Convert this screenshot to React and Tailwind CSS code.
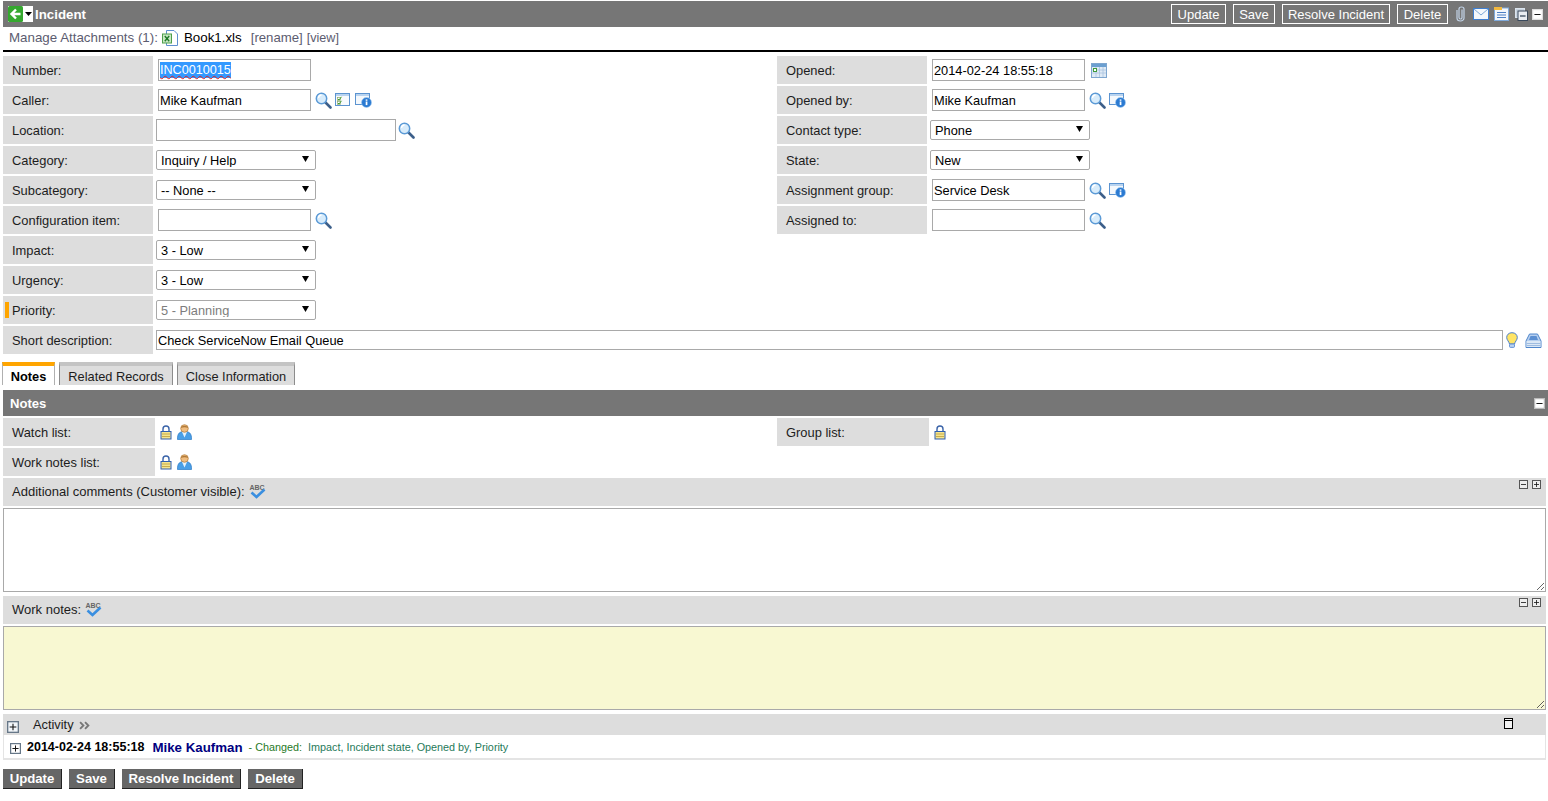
import React from "react";

const Mag = ({ className = "" }) => (
  <svg width="17" height="17" viewBox="0 0 17 17" className={`shrink-0 ${className}`}>
    <path d="M10.5 10.5 L15.5 15.5" stroke="#3c5f8a" strokeWidth="2.6" strokeLinecap="round" />
    <circle cx="6.5" cy="6.5" r="5.2" fill="#d8ecfb" stroke="#5b9ad6" strokeWidth="1.5" />
    <path d="M3.5 6 A3.2 3.2 0 0 1 6.5 3" stroke="#fff" strokeWidth="1.3" fill="none" />
  </svg>
);
const Win = ({ children, className = "" }) => (
  <svg width="17" height="16" viewBox="0 0 17 16" className={`shrink-0 ${className}`}>
    <rect x="0.5" y="1.5" width="14" height="11" fill="#f4f8fc" stroke="#5b93d0" />
    <rect x="1" y="2" width="13" height="2" fill="#b8d3ef" />
    {children}
  </svg>
);
const Check = ({ className = "" }) => (
  <svg width="15" height="14" viewBox="0 0 15 14" className={`shrink-0 ${className}`}>
    <rect x="0.5" y="0.5" width="14" height="12" fill="#f7fafd" stroke="#5b93d0" />
    <rect x="1" y="1" width="13" height="2" fill="#b8d3ef" />
    <rect x="2.5" y="4.5" width="3" height="3" fill="#fff" stroke="#8aa86a" strokeWidth="0.7" />
    <rect x="2.5" y="8.5" width="3" height="3" fill="#fff" stroke="#8aa86a" strokeWidth="0.7" />
    <path d="M3 6 L4 7 L6.5 3.8 M3 10 L4 11 L6.5 7.8" stroke="#3f9a2e" strokeWidth="1" fill="none" />
  </svg>
);
const Info = ({ className = "" }) => (
  <Win className={className}>
    <circle cx="11.5" cy="10.5" r="5" fill="#2a7ad2" stroke="#a4cdf2" strokeWidth="0.6" />
    <rect x="10.7" y="9.5" width="1.7" height="3.6" fill="#fff" />
    <rect x="10.7" y="7.4" width="1.7" height="1.4" fill="#fff" />
  </Win>
);
const Cal = () => (
  <svg width="16" height="15" viewBox="0 0 16 15" className="shrink-0">
    <rect x="0.5" y="0.5" width="15" height="14" fill="#dfeaf5" stroke="#7ea6cf" />
    <rect x="1" y="1" width="14" height="3" fill="#6b9fd0" />
    <path d="M1 7h14M1 10h14M5 4v10M8.5 4v10M12 4v10" stroke="#a9c4df" strokeWidth="0.8" />
    <rect x="2.5" y="5.5" width="3" height="3" fill="#fff" stroke="#3e9a3a" />
  </svg>
);
const Lock = () => (
  <svg width="12" height="15" viewBox="0 0 12 15" className="shrink-0">
    <path d="M3 7V4a3 3 0 0 1 6 0v3" fill="none" stroke="#3a63a8" strokeWidth="1.4" />
    <rect x="1" y="6.5" width="10" height="7.5" fill="#f5e48f" stroke="#2f5fb0" />
    <path d="M2 9h8M2 11.5h8" stroke="#c7ad4c" />
  </svg>
);
const User = () => (
  <svg width="15" height="16" viewBox="0 0 15 16" className="shrink-0">
    <path d="M0.5 15.5 C0.2 9 3 7.5 7.5 7.5 C12 7.5 14.8 9 14.5 15.5 Z" fill="#4a9fe6" stroke="#2a78c4" strokeWidth="0.7" />
    <path d="M5 8 L7.5 13.5 L10 8 Z" fill="#e6f2fb" />
    <circle cx="7.5" cy="4.5" r="3.8" fill="#f0bd80" stroke="#b07a38" strokeWidth="0.7" />
    <path d="M4 4 C4 1 11 1 11 4 C9 3 6 3 4 4Z" fill="#b07a38" />
  </svg>
);
const Spell = () => (
  <svg width="17" height="15" viewBox="0 0 17 15" className="shrink-0">
    <text x="0.5" y="6" fontSize="7" fontFamily="'Liberation Sans', sans-serif" fill="#666" fontWeight="700">ABC</text>
    <path d="M2.5 8.5 L7.5 13 L15.5 5.5" fill="none" stroke="#3a8fe0" strokeWidth="2.6" />
  </svg>
);
const Bulb = () => (
  <svg width="12" height="16" viewBox="0 0 12 16" className="shrink-0">
    <path d="M6 0.7 C2.6 0.7 0.7 3 0.7 5.5 C0.7 8 3 9.5 3.5 12 H8.5 C9 9.5 11.3 8 11.3 5.5 C11.3 3 9.4 0.7 6 0.7Z" fill="#ffe566" stroke="#4a7fd0" />
    <rect x="3.5" y="12" width="5" height="3.4" rx="1" fill="#bcd4f0" stroke="#4a7fd0" strokeWidth="0.8" />
  </svg>
);
const Drawer = () => (
  <svg width="17" height="15" viewBox="0 0 17 15" className="shrink-0">
    <path d="M4.5 1 H12.5 L16 8 V14.5 H1 V8 Z" fill="#b6cfee" stroke="#4f86cc" />
    <path d="M5.5 3h6l1.5 4H4z" fill="#5b8fd2" />
    <rect x="1.5" y="8" width="14" height="6" fill="#dbe8f6" />
    <path d="M1.5 10.5h14M1.5 12.5h14" stroke="#9fbce0" />
  </svg>
);
const Clip = () => (
  <svg width="11" height="16" viewBox="0 0 11 16" className="shrink-0">
    <path d="M7 3.5 V11.5 A1.5 1.5 0 0 1 4 11.5 V3 A2.5 2 0 0 1 9 3 V12 A3.5 3 0 0 1 2 12 V4" fill="none" stroke="#c3d4e8" strokeWidth="1.2" />
  </svg>
);
const Mail = () => (
  <svg width="16" height="12" viewBox="0 0 16 12" className="shrink-0">
    <rect x="0.5" y="0.5" width="15" height="11" fill="#f4f8fc" stroke="#3f7fd0" />
    <path d="M1 1 L8 7 L15 1" fill="none" stroke="#7da8d8" />
  </svg>
);
const ListI = () => (
  <svg width="15" height="14" viewBox="0 0 15 14" className="shrink-0">
    <rect x="0.5" y="1" width="14" height="12.5" fill="#f3f7fc" stroke="#7fa9da" />
    <rect x="0" y="0" width="8" height="3" fill="#f3b93f" />
    <path d="M3 5.5h9M3 8h9M3 10.5h9" stroke="#4c7fc4" />
  </svg>
);
const Copy = () => (
  <svg width="13" height="13" viewBox="0 0 13 13" className="shrink-0">
    <rect x="0.5" y="0.5" width="9" height="9" fill="#c8d3de" stroke="#dbe4ee" />
    <rect x="3" y="3" width="9.5" height="9.5" fill="#e8edf3" stroke="#39495c" />
    <path d="M5 8h5.5" stroke="#39495c" strokeWidth="1.3" />
  </svg>
);
const PM = ({ plus, s = 9, className = "", bg = "#eeeeee", stroke = "#555" }) => (
  <svg width={s} height={s} viewBox="0 0 9 9" className={`shrink-0 ${className}`}>
    <rect x="0.5" y="0.5" width="8" height="8" fill={bg} stroke={stroke} />
    <path d={plus ? "M2 4.5h5M4.5 2v5" : "M2 4.5h5"} stroke="#111" strokeWidth="0.8" />
  </svg>
);
const Excel = () => (
  <svg width="16" height="16" viewBox="0 0 16 16" className="shrink-0">
    <path d="M4.5 0.5 H12 L15.5 4 V15.5 H4.5 Z" fill="#fff" stroke="#5f8fcf" />
    <rect x="0.5" y="4" width="9" height="9" fill="#c9e8c5" stroke="#4f9f4a" />
    <path d="M2.8 6 L7.2 11.2 M7.2 6 L2.8 11.2" stroke="#1f7a28" strokeWidth="1.4" />
  </svg>
);
const Back = () => (
  <div className="w-[25px] h-[16px] bg-white flex items-center shrink-0">
    <svg width="15" height="16" viewBox="0 0 15 16" className="shrink-0">
      <rect width="15" height="16" rx="1.5" fill="#35a82f" />
      <path d="M12.5 8 H4 M8 3.5 L3.5 8 L8 12.5" fill="none" stroke="#fff" strokeWidth="2.4" />
    </svg>
    <svg width="7" height="4" viewBox="0 0 7 4" className="ml-[2px]">
      <path d="M0 0h7L3.5 4z" fill="#000" />
    </svg>
  </div>
);

const Label = ({ children, w = "w-[150px]", marker }) => (
  <div className={`relative ${w} h-[28px] bg-[#dddddd] pl-[9px] pt-[2px] text-[12.9px] flex items-center shrink-0 text-[#1c1c1c]`}>
    {marker && <span className="absolute left-[2px] top-[6px] w-[4px] h-[16px] bg-[#ffa500]" />}
    {children}
  </div>
);
const TextIn = ({ value = "", w = "w-[153px]", className = "" }) => (
  <input
    readOnly
    value={value}
    className={`${w} h-[22px] border border-[#a9a9a9] px-[1px] bg-white text-black outline-none shrink-0 ${className}`}
  />
);
const Sel = ({ value, muted }) => (
  <div className="relative w-[160px] h-[20px] ml-[3px] shrink-0">
    <select
      value={value}
      disabled={muted}
      onChange={() => {}}
      className={`appearance-none w-full h-full border border-[#a9a9a9] rounded-[2px] bg-white pl-[4px] pt-[2px] outline-none ${muted ? "text-[#7d7d7d]" : "text-black"}`}
    >
      <option>{value}</option>
    </select>
    <svg width="7" height="6" viewBox="0 0 7 6" className="absolute right-[7px] top-[6px] pointer-events-none">
      <path d="M0 0h7L3.5 6z" fill="#000" />
    </svg>
  </div>
);
const Row = ({ label, marker, children }) => (
  <div className="flex items-center h-[28px]">
    <Label marker={marker}>{label}</Label>
    {children}
  </div>
);
const TopBtn = ({ children, w }) => (
  <div className={`${w} h-[20px] pt-[1px] border border-white text-white text-[13px] flex items-center justify-center shrink-0`}>{children}</div>
);
const BotBtn = ({ children, w }) => (
  <div className={`${w} h-[20px] pt-[1px] bg-[#666666] border-r border-b border-[#222] text-white text-[13.2px] font-bold flex items-center justify-center`}>{children}</div>
);
const Tab = ({ children, active, w }) =>
  active ? (
    <div className={`${w} h-[23px] pt-[3px] border-t-[4px] border-t-[#ffa500] border-x border-x-[#b0b0b0] bg-white font-bold text-black flex items-center justify-center`}>
      {children}
    </div>
  ) : (
    <div className={`${w} h-[23px] pt-[3px] border-t-[4px] border-t-[#c4c4c4] border-x border-x-[#8c8c8c] bg-[#dddddd] text-[#1c1c1c] flex items-center justify-center`}>
      {children}
    </div>
  );
const JournalBar = ({ children }) => (
  <div className="h-[28px] w-[1543px] bg-[#dddddd] pl-[9px] flex items-start justify-between text-[#1c1c1c] text-[13px]">
    <div className="flex items-center gap-[4px] h-[26px]">{children}</div>
    <div className="flex gap-[4px] pt-[2px] pr-[5px]">
      <PM />
      <PM plus />
    </div>
  </div>
);

export default function App() {
  return (
    <div className="w-[1548px] h-[801px] overflow-hidden bg-white pt-[1px] text-[12.8px] leading-none font-['Liberation_Sans',Arial,sans-serif]">
      {/* header */}
      <div className="ml-[3px] h-[26px] bg-[#767676] flex items-center justify-between pl-[5px] pr-[5px]">
        <div className="flex items-center gap-[2px]">
          <Back />
          <span className="text-white font-bold text-[13.3px] pt-[1px]">Incident</span>
        </div>
        <div className="flex items-center">
          <div className="flex items-center gap-[7px]">
            <TopBtn w="w-[55px]">Update</TopBtn>
            <TopBtn w="w-[42px]">Save</TopBtn>
            <TopBtn w="w-[108px]">Resolve Incident</TopBtn>
            <TopBtn w="w-[51px]">Delete</TopBtn>
          </div>
          <div className="flex items-center ml-[7px] gap-[5px]">
            <Clip />
            <span className="ml-[2px]"><Mail /></span>
            <ListI />
            <span className="ml-[1px]"><Copy /></span>
            <PM s={11} className="-ml-[1px]" bg="#fff" stroke="#ddd" />
          </div>
        </div>
      </div>
      {/* attachments */}
      <div className="h-[23px] ml-[9px] pb-[1px] flex items-center text-[#5c5c70] text-[13.33px]">
        <span>Manage Attachments (1):</span>
        <span className="ml-[4px]"><Excel /></span>
        <span className="ml-[6px] text-black">Book1.xls</span>
        <span className="ml-[9px] text-[13.2px]">[rename]</span>
        <span className="ml-[4px] text-[12.6px]">[view]</span>
      </div>
      <div className="ml-[3px] h-[2px] bg-black" />

      {/* form */}
      <div className="ml-[3px] mt-[4px] grid grid-cols-[774px_1fr]">
        <div className="flex flex-col gap-[2px]">
          <Row label="Number:">
            <div className="ml-[5px] w-[153px] h-[22px] border border-[#a9a9a9] px-[1px] flex items-center text-[12.6px]">
              <span className="bg-[#3399ff] text-white h-[16px] flex items-center underline decoration-wavy decoration-[#e02020] decoration-1 underline-offset-[1px]">INC0010015</span>
            </div>
          </Row>
          <Row label="Caller:">
            <TextIn value="Mike Kaufman" className="ml-[5px]" />
            <Mag className="ml-[4px]" />
            <span className="ml-[3px]"><Check /></span>
            <Info className="ml-[5px]" />
          </Row>
          <Row label="Location:">
            <TextIn w="w-[240px]" className="ml-[3px]" />
            <Mag className="ml-[2px]" />
          </Row>
          <Row label="Category:"><Sel value="Inquiry / Help" /></Row>
          <Row label="Subcategory:"><Sel value="-- None --" /></Row>
          <Row label="Configuration item:">
            <TextIn className="ml-[5px]" />
            <Mag className="ml-[4px]" />
          </Row>
          <Row label="Impact:"><Sel value="3 - Low" /></Row>
          <Row label="Urgency:"><Sel value="3 - Low" /></Row>
          <Row label="Priority:" marker><Sel value="5 - Planning" muted /></Row>
        </div>
        <div className="flex flex-col gap-[2px]">
          <Row label="Opened:">
            <TextIn value="2014-02-24 18:55:18" className="ml-[5px]" />
            <span className="ml-[6px]"><Cal /></span>
          </Row>
          <Row label="Opened by:">
            <TextIn value="Mike Kaufman" className="ml-[5px]" />
            <Mag className="ml-[4px]" />
            <Info className="ml-[3px]" />
          </Row>
          <Row label="Contact type:"><Sel value="Phone" /></Row>
          <Row label="State:"><Sel value="New" /></Row>
          <Row label="Assignment group:">
            <TextIn value="Service Desk" className="ml-[5px]" />
            <Mag className="ml-[4px]" />
            <Info className="ml-[3px]" />
          </Row>
          <Row label="Assigned to:">
            <TextIn className="ml-[5px]" />
            <Mag className="ml-[4px]" />
          </Row>
        </div>
      </div>
      <div className="ml-[3px] mt-[2px] flex items-center h-[28px]">
        <Label>Short description:</Label>
        <input
          readOnly
          value="Check ServiceNow Email Queue"
          className="ml-[3px] w-[1347px] h-[20px] border border-[#a9a9a9] px-[1px] text-black outline-none"
        />
        <span className="ml-[3px]"><Bulb /></span>
        <span className="ml-[7px]"><Drawer /></span>
      </div>

      {/* tabs */}
      <div className="ml-[2px] mt-[8px] flex gap-[4px]">
        <Tab active w="w-[53px]">Notes</Tab>
        <Tab w="w-[114px]">Related Records</Tab>
        <Tab w="w-[118px]">Close Information</Tab>
      </div>

      {/* notes section */}
      <div className="ml-[3px] mt-[5px] h-[26px] bg-[#767676] flex items-center justify-between pl-[7px] pr-[3px]">
        <span className="text-white font-bold text-[13.1px] pt-[1px]">Notes</span>
        <PM s={11} bg="#fff" stroke="#bbb" />
      </div>
      <div className="ml-[3px] mt-[2px] grid grid-cols-[774px_1fr]">
        <div className="flex flex-col gap-[2px]">
          <div className="flex items-center">
            <Label w="w-[152px]">Watch list:</Label>
            <span className="ml-[5px]"><Lock /></span>
            <span className="ml-[5px]"><User /></span>
          </div>
          <div className="flex items-center">
            <Label w="w-[152px]">Work notes list:</Label>
            <span className="ml-[5px]"><Lock /></span>
            <span className="ml-[5px]"><User /></span>
          </div>
        </div>
        <div className="flex items-center self-start">
          <Label w="w-[152px]">Group list:</Label>
          <span className="ml-[5px]"><Lock /></span>
        </div>
      </div>

      <div className="ml-[3px] mt-[2px] flex flex-col">
        <JournalBar>Additional comments (Customer visible): <Spell /></JournalBar>
        <textarea readOnly className="block mt-[2px] w-[1543px] h-[84px] border border-[#a9a9a9] bg-white outline-none" />
        <div className="mt-[4px]">
          <JournalBar>Work notes: <Spell /></JournalBar>
        </div>
        <textarea readOnly className="block mt-[2px] w-[1543px] h-[84px] border border-[#a9a9a9] bg-[#f8f8d2] outline-none" />
      </div>

      {/* activity */}
      <div className="ml-[3px] mt-[4px] w-[1543px]">
        <div className="h-[21px] bg-[#dddddd] flex items-center pl-[4px] pr-[33px] text-[#1c1c1c]">
          <PM plus s={12} className="mt-[4px]" bg="#f2f6fa" stroke="#667788" />
          <span className="ml-[14px] pt-[2px]">Activity</span>
          <svg width="11" height="9" viewBox="0 0 10 8" className="ml-[5px] mt-[2px]">
            <path d="M1 1l3 3-3 3M5.5 1l3 3-3 3" fill="none" stroke="#777" strokeWidth="1.7" />
          </svg>
          <svg width="9" height="11" viewBox="0 0 9 11" className="ml-auto -mt-[2px]">
            <rect x="0.5" y="0.5" width="8" height="10" fill="#f2f2f2" stroke="#000" />
            <path d="M0 2.5h9" stroke="#000" />
          </svg>
        </div>
        <div className="h-[25px] border-x border-b-2 border-[#e4e4e4] flex items-center pl-[6px] pt-[2px]">
          <PM plus s={11} className="mt-[2px]" bg="#fff" stroke="#667788" />
          <span className="ml-[6px] font-bold text-black text-[12.5px]">2014-02-24 18:55:18</span>
          <span className="ml-[8px] font-bold text-[#000080] text-[13.3px]">Mike Kaufman</span>
          <span className="ml-[6px] text-[10.8px] text-[#1f7a1f]">- Changed:</span>
          <span className="ml-[6px] text-[10.8px] text-[#1f7a5a]">Impact, Incident state, Opened by, Priority</span>
        </div>
      </div>

      {/* bottom buttons */}
      <div className="ml-[3px] mt-[9px] flex gap-[7px]">
        <BotBtn w="w-[59px]">Update</BotBtn>
        <BotBtn w="w-[46px]">Save</BotBtn>
        <BotBtn w="w-[119px]">Resolve Incident</BotBtn>
        <BotBtn w="w-[55px]">Delete</BotBtn>
      </div>
    </div>
  );
}
